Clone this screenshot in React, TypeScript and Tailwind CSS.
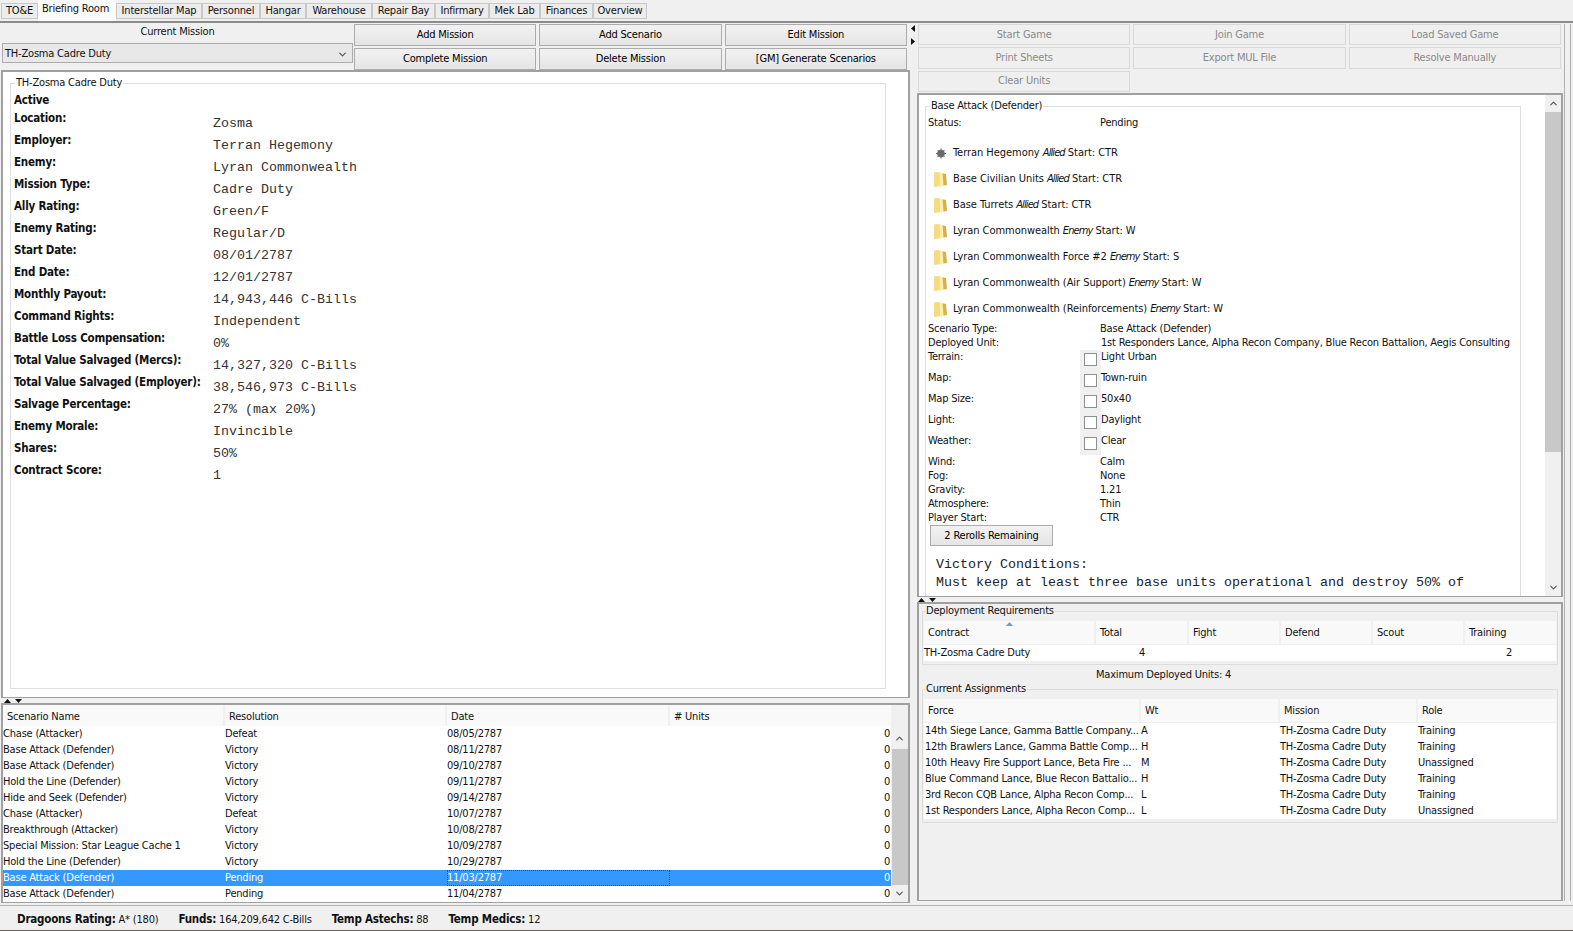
import { ChevronDown, ChevronUp } from "lucide-react";
import type { ReactNode } from "react";

const tabs = [
  { label: "TO&E", w: "w-[37px]" },
  { label: "Briefing Room", w: "w-[78px]", active: true },
  { label: "Interstellar Map", w: "w-[86px]" },
  { label: "Personnel", w: "w-[58px]" },
  { label: "Hangar", w: "w-[46px]" },
  { label: "Warehouse", w: "w-[66px]" },
  { label: "Repair Bay", w: "w-[63px]" },
  { label: "Infirmary", w: "w-[54px]" },
  { label: "Mek Lab", w: "w-[51px]" },
  { label: "Finances", w: "w-[53px]" },
  { label: "Overview", w: "w-[54px]" },
];

const details = [
  ["Location:", "Zosma"],
  ["Employer:", "Terran Hegemony"],
  ["Enemy:", "Lyran Commonwealth"],
  ["Mission Type:", "Cadre Duty"],
  ["Ally Rating:", "Green/F"],
  ["Enemy Rating:", "Regular/D"],
  ["Start Date:", "08/01/2787"],
  ["End Date:", "12/01/2787"],
  ["Monthly Payout:", "14,943,446 C-Bills"],
  ["Command Rights:", "Independent"],
  ["Battle Loss Compensation:", "0%"],
  ["Total Value Salvaged (Mercs):", "14,327,320 C-Bills"],
  ["Total Value Salvaged (Employer):", "38,546,973 C-Bills"],
  ["Salvage Percentage:", "27% (max 20%)"],
  ["Enemy Morale:", "Invincible"],
  ["Shares:", "50%"],
  ["Contract Score:", "1"],
];

const scenarios = [
  ["Chase (Attacker)", "Defeat", "08/05/2787"],
  ["Base Attack (Defender)", "Victory", "08/11/2787"],
  ["Base Attack (Defender)", "Victory", "09/10/2787"],
  ["Hold the Line (Defender)", "Victory", "09/11/2787"],
  ["Hide and Seek (Defender)", "Victory", "09/14/2787"],
  ["Chase (Attacker)", "Defeat", "10/07/2787"],
  ["Breakthrough (Attacker)", "Victory", "10/08/2787"],
  ["Special Mission: Star League Cache 1", "Victory", "10/09/2787"],
  ["Hold the Line (Defender)", "Victory", "10/29/2787"],
  ["Base Attack (Defender)", "Pending", "11/03/2787"],
  ["Base Attack (Defender)", "Pending", "11/04/2787"],
];

const forces = [
  { name: "Terran Hegemony", side: "Allied", start: "CTR", gear: true },
  { name: "Base Civilian Units", side: "Allied", start: "CTR" },
  { name: "Base Turrets", side: "Allied", start: "CTR" },
  { name: "Lyran Commonwealth", side: "Enemy", start: "W" },
  { name: "Lyran Commonwealth Force #2", side: "Enemy", start: "S" },
  { name: "Lyran Commonwealth (Air Support)", side: "Enemy", start: "W" },
  { name: "Lyran Commonwealth (Reinforcements)", side: "Enemy", start: "W" },
];

const checks = [
  ["Terrain:", "Light Urban"],
  ["Map:", "Town-ruin"],
  ["Map Size:", "50x40"],
  ["Light:", "Daylight"],
  ["Weather:", "Clear"],
];

const conditions = [
  ["Wind:", "Calm"],
  ["Fog:", "None"],
  ["Gravity:", "1.21"],
  ["Atmosphere:", "Thin"],
  ["Player Start:", "CTR"],
];

const assignments = [
  ["14th Siege Lance, Gamma Battle Company...", "A", "Training"],
  ["12th Brawlers Lance, Gamma Battle Comp...", "H", "Training"],
  ["10th Heavy Fire Support Lance, Beta Fire ...", "M", "Unassigned"],
  ["Blue Command Lance, Blue Recon Battalio...", "H", "Training"],
  ["3rd Recon CQB Lance, Alpha Recon Comp...", "L", "Training"],
  ["1st Responders Lance, Alpha Recon Comp...", "L", "Unassigned"],
];

function Btn({ children, disabled, className = "" }: { children: ReactNode; disabled?: boolean; className?: string }) {
  return (
    <button
      type="button"
      className={`flex items-center justify-center border ${
        disabled
          ? "border-[#d9d9d9] bg-[#efefef] text-[#8a8a8a]"
          : "border-[#acacac] bg-gradient-to-b from-[#f2f2f2] to-[#e5e5e5] text-black"
      } ${className}`}
    >
      {children}
    </button>
  );
}

function Folder() {
  return (
    <svg width="15" height="17" viewBox="0 0 15 17" className="shrink-0">
      <path d="M1 2.5 Q1 1 2.5 1 L8 1.5 L8 15 L2.5 16 Q1 16 1 14.5 Z" fill="#f5dc82" />
      <path d="M8 2 L13 3 L14 14 L8 15 Z" fill="#d8b04a" />
      <path d="M7 2 L9.5 2 L10.5 15 L7 16 Z" fill="#fdf0ae" />
    </svg>
  );
}

function Gear() {
  return (
    <svg width="15" height="17" viewBox="0 0 15 17" className="shrink-0">
      <circle cx="8" cy="8.5" r="3.8" fill="#6a6a6a" />
      <path d="M8 3.5 V13.5 M3 8.5 H13 M4.5 5 L11.5 12 M11.5 5 L4.5 12" stroke="#6a6a6a" strokeWidth="1" />
    </svg>
  );
}

function Triangle({ down }: { down?: boolean }) {
  return (
    <svg width="7" height="4" viewBox="0 0 7 4">
      <path d={down ? "M0 0 H7 L3.5 4 Z" : "M3.5 0 L7 4 H0 Z"} fill="#111" />
    </svg>
  );
}

function HeaderCell({ children, className = "" }: { children: ReactNode; className?: string }) {
  return <div className={`flex items-center bg-[#f9f9f9] pl-[4px] ${className}`}>{children}</div>;
}

export default function App() {
  return (
    <div className="flex h-screen w-[1573px] flex-col overflow-hidden bg-[#f0f0f0] font-['DejaVu_Sans_Condensed','DejaVu_Sans',sans-serif] text-[11px] leading-[14px] tracking-[-0.2px] text-[#111]">
      {/* tab strip */}
      <div className="flex h-[23px] shrink-0 items-start border-b-2 border-[#8c8c8c] pl-[1px]">
        {tabs.map((tab) =>
          tab.active ? (
            <div key={tab.label} className={`flex h-[21px] ${tab.w} items-start justify-center bg-[#fbfbfb] pr-[3px] pt-[2px]`}>
              {tab.label}
            </div>
          ) : (
            <div
              key={tab.label}
              className={`mt-[3px] flex h-[16px] ${tab.w} items-center justify-center border border-[#c8c8c8] bg-[#ececec] pb-[1px]`}
            >
              {tab.label}
            </div>
          ),
        )}
      </div>

      <div className="flex h-[878px] shrink-0 pt-[1px]">
        {/* left column */}
        <div className="flex w-[910px] shrink-0 flex-col">
          <div className="flex h-[46px] shrink-0 pl-[2px]">
            <div className="flex w-[351px] flex-col">
              <div className="flex h-[19px] items-start justify-center pt-[1px]">Current Mission</div>
              <div className="flex h-[20px] items-center justify-between border border-[#acacac] bg-[#e8e8e8] pl-[2px] pr-[4px] pt-[2px]">
                <span>TH-Zosma Cadre Duty</span>
                <ChevronDown size={11} strokeWidth={2.5} className="text-[#555]" />
              </div>
            </div>
            <div className="ml-[1px] grid w-[553px] grid-cols-3 grid-rows-2 gap-x-[3px] gap-y-[2px]">
              <Btn>Add Mission</Btn>
              <Btn>Add Scenario</Btn>
              <Btn>Edit Mission</Btn>
              <Btn>Complete Mission</Btn>
              <Btn>Delete Mission</Btn>
              <Btn>[GM] Generate Scenarios</Btn>
            </div>
          </div>

          {/* mission details */}
          <div className="ml-[1px] h-[628px] shrink-0 border-2 border-[#a0a0a0] border-b-[1px] bg-white pl-[7px] pt-[4px]">
            <fieldset className="h-[613px] w-[876px] border border-[#dfdfdf] pl-[3px]">
              <legend className="ml-[1px] px-[1px] leading-[14px]">TH-Zosma Cadre Duty</legend>
              <div className="mt-[3px] h-[14px] text-[11.5px] font-bold">Active</div>
              <div className="grid w-[500px] grid-cols-[199px_1fr] pt-[4px]">
                {details.map(([label, value]) => (
                  <div key={label} className="col-span-2 grid h-[22px] grid-cols-subgrid">
                    <div className="text-[11.5px] font-bold">{label}</div>
                    <div className="pt-[5px] font-['Liberation_Mono',monospace] text-[13.33px] leading-[16px] tracking-normal text-[#333]">
                      {value}
                    </div>
                  </div>
                ))}
              </div>
            </fieldset>
          </div>

          {/* splitter */}
          <div className="flex h-[5px] shrink-0 items-center gap-[4px] pl-[4px]">
            <Triangle />
            <Triangle down />
          </div>

          {/* scenario table */}
          <div className="ml-[1px] flex h-[200px] w-[909px] shrink-0 border-2 border-[#a0a0a0] border-b-[1px] bg-white">
            <div className="flex w-[888px] shrink-0 flex-col">
              <div className="grid h-[21px] shrink-0 grid-cols-[220px_220px_221px_1fr] gap-x-[2px] bg-[#f0f0f0]">
                <HeaderCell className="pt-[3px]">Scenario Name</HeaderCell>
                <HeaderCell className="pt-[3px]">Resolution</HeaderCell>
                <HeaderCell className="pt-[3px]">Date</HeaderCell>
                <HeaderCell className="pt-[3px]"># Units</HeaderCell>
              </div>
              <div>
                {scenarios.map(([name, resolution, date], i) => (
                  <div
                    key={`${name}${date}`}
                    className={`grid h-[16px] grid-cols-[222px_222px_223px_1fr] items-center ${
                      i === 9 ? "bg-[#3399ff] text-white" : ""
                    }`}
                  >
                    <div>{name}</div>
                    <div>{resolution}</div>
                    <div
                      className={`flex h-full items-center ${
                        i === 9 ? "outline-1 -outline-offset-1 outline-dotted outline-[#444]" : ""
                      }`}
                    >
                      {date}
                    </div>
                    <div className="pr-[1px] text-right">0</div>
                  </div>
                ))}
              </div>
            </div>
            <div className="flex w-[18px] flex-col items-center bg-[#f0f0f0]">
              <div className="flex h-[44px] w-full items-end justify-center pb-[5px]">
                <ChevronUp size={11} strokeWidth={2.5} className="text-[#555]" />
              </div>
              <div className="h-[136px] w-[16px] bg-[#c8c8c8]" />
              <div className="flex flex-1 items-center justify-center">
                <ChevronDown size={11} strokeWidth={2.5} className="text-[#555]" />
              </div>
            </div>
          </div>
        </div>

        {/* vertical splitter */}
        <div className="flex w-[7px] shrink-0 flex-col items-start gap-[6px] pl-[1px] pt-[1px]">
          <svg width="4" height="7" viewBox="0 0 4 7"><path d="M4 0 V7 L0 3.5 Z" fill="#111" /></svg>
          <svg width="4" height="7" viewBox="0 0 4 7"><path d="M0 0 V7 L4 3.5 Z" fill="#111" /></svg>
        </div>

        {/* right column */}
        <div className="flex w-[646px] shrink-0 flex-col">
          <div className="grid h-[68px] shrink-0 grid-cols-3 grid-rows-3 gap-x-[3px] gap-y-[2px] pl-[1px] pr-[2px]">
            <Btn disabled>Start Game</Btn>
            <Btn disabled>Join Game</Btn>
            <Btn disabled>Load Saved Game</Btn>
            <Btn disabled>Print Sheets</Btn>
            <Btn disabled>Export MUL File</Btn>
            <Btn disabled>Resolve Manually</Btn>
            <Btn disabled>Clear Units</Btn>
          </div>

          {/* scenario details */}
          <div className="mt-[1px] flex h-[504px] shrink-0 overflow-hidden border-2 border-[#a0a0a0] border-b-[1px] bg-white">
            <div className="w-[626px] shrink-0 pl-[6px] pt-[4px]">
              <fieldset className="h-[530px] w-[596px] border border-[#dfdfdf] pl-[2px]">
                <legend className="ml-[2px] px-[1px] leading-[14px]">Base Attack (Defender)</legend>
                <div className="mt-[3px] grid h-[14px] grid-cols-[172px_1fr]">
                  <div>Status:</div>
                  <div>Pending</div>
                </div>
                <div className="mt-[10px] flex flex-col">
                  {forces.map((force) => (
                    <div key={force.name} className="flex h-[26px] items-center gap-[5px] pl-[5px]">
                      {force.gear ? <Gear /> : <Folder />}
                      <span className="tracking-[-0.05px]">
                        {force.name} <i className="tracking-[-0.9px]">{force.side}</i> Start: {force.start}
                      </span>
                    </div>
                  ))}
                </div>
                <div className="grid grid-cols-[172px_1fr]">
                  <div>Scenario Type:</div>
                  <div>Base Attack (Defender)</div>
                  <div>Deployed Unit:</div>
                  <div className="whitespace-nowrap pl-[1px]">
                    1st Responders Lance, Alpha Recon Company, Blue Recon Battalion, Aegis Consulting
                  </div>
                </div>
                {checks.map(([label, value]) => (
                  <div key={label} className="grid h-[21px] grid-cols-[152px_21px_1fr]">
                    <div>{label}</div>
                    <div className="flex justify-center bg-[#f0f0f0] pt-[3px]">
                      <div className="h-[13px] w-[13px] border border-[#8e8f8f] bg-white" />
                    </div>
                    <div>{value}</div>
                  </div>
                ))}
                <div className="grid grid-cols-[172px_1fr]">
                  {conditions.map(([label, value]) => (
                    <div key={label} className="col-span-2 grid grid-cols-subgrid">
                      <div>{label}</div>
                      <div>{value}</div>
                    </div>
                  ))}
                </div>
                <Btn className="ml-[2px] h-[21px] w-[123px]">2 Rerolls Remaining</Btn>
                <div className="mt-[10px] whitespace-nowrap pl-[8px] font-['Liberation_Mono',monospace] text-[13.33px] leading-[18px] tracking-normal text-[#222]">
                  <div>Victory Conditions:</div>
                  <div>Must keep at least three base units operational and destroy 50% of</div>
                </div>
              </fieldset>
            </div>
            <div className="flex w-[16px] shrink-0 flex-col bg-[#f0f0f0]">
              <div className="flex h-[17px] items-center justify-center">
                <ChevronUp size={11} strokeWidth={2.5} className="text-[#555]" />
              </div>
              <div className="h-[340px] bg-[#c8c8c8]" />
              <div className="flex flex-1 items-end justify-center pb-[3px]">
                <ChevronDown size={11} strokeWidth={2.5} className="text-[#555]" />
              </div>
            </div>
          </div>

          {/* splitter */}
          <div className="flex h-[5px] shrink-0 items-center gap-[4px] pl-[1px]">
            <Triangle />
            <Triangle down />
          </div>

          {/* deployment */}
          <div className="h-[299px] shrink-0 border-2 border-[#a0a0a0] border-b-[1px] px-[3px]">
            <fieldset className="h-[61px] border border-[#dcdcdc] px-[1px]">
              <legend className="ml-[1px] px-[1px] leading-[14px]">Deployment Requirements</legend>
              <div className="relative mt-[3px] grid h-[23px] grid-cols-[170px_91px_90px_90px_90px_1fr] gap-x-[2px]">
                <HeaderCell>Contract</HeaderCell>
                <HeaderCell>Total</HeaderCell>
                <HeaderCell>Fight</HeaderCell>
                <HeaderCell>Defend</HeaderCell>
                <HeaderCell>Scout</HeaderCell>
                <HeaderCell>Training</HeaderCell>
                <svg width="7" height="4" viewBox="0 0 7 4" className="absolute left-[82px] top-[1px]">
                  <path d="M3.5 0 L7 4 H0 Z" fill="#7f99b0" />
                </svg>
              </div>
              <div className="mt-[1px] grid h-[16px] grid-cols-[172px_93px_92px_92px_92px_1fr] items-center bg-white">
                <div>TH-Zosma Cadre Duty</div>
                <div className="pl-[43px]">4</div>
                <div />
                <div />
                <div />
                <div className="pl-[41px]">2</div>
              </div>
            </fieldset>
            <div className="flex h-[15px] items-center pl-[174px] pt-[5px]">Maximum Deployed Units: 4</div>
            <fieldset className="mt-[2px] h-[141px] border border-[#dcdcdc] px-[1px]">
              <legend className="ml-[1px] px-[1px] leading-[14px]">Current Assignments</legend>
              <div className="mt-[3px] grid h-[23px] grid-cols-[215px_137px_136px_1fr] gap-x-[2px]">
                <HeaderCell>Force</HeaderCell>
                <HeaderCell>Wt</HeaderCell>
                <HeaderCell>Mission</HeaderCell>
                <HeaderCell>Role</HeaderCell>
              </div>
              <div className="mt-[1px] bg-white">
                {assignments.map(([name, wt, role]) => (
                  <div key={name} className="grid h-[16px] grid-cols-[217px_139px_138px_1fr] items-center">
                    <div className="whitespace-nowrap pl-[1px]">{name}</div>
                    <div>{wt}</div>
                    <div>TH-Zosma Cadre Duty</div>
                    <div>{role}</div>
                  </div>
                ))}
              </div>
            </fieldset>
          </div>
        </div>

        {/* outer frame lines */}
        <div className="ml-[1px] w-[1px] shrink-0 bg-[#b0b0b0]" />
        <div className="ml-[5px] w-[1px] shrink-0 bg-[#b0b0b0]" />
      </div>

      {/* status bar */}
      <div className="mt-[4px] flex h-[25px] shrink-0 items-center gap-[20px] border-t border-[#b4b4b4] pl-[17px] pt-[2px]">
        <span><b className="text-[11.5px]">Dragoons Rating:</b> A* (180)</span>
        <span><b className="text-[11.5px]">Funds:</b> 164,209,642 C-Bills</span>
        <span><b className="text-[11.5px]">Temp Astechs:</b> 88</span>
        <span><b className="text-[11.5px]">Temp Medics:</b> 12</span>
      </div>
      <div className="h-[1px] shrink-0 bg-[#6b6553]" />
    </div>
  );
}
